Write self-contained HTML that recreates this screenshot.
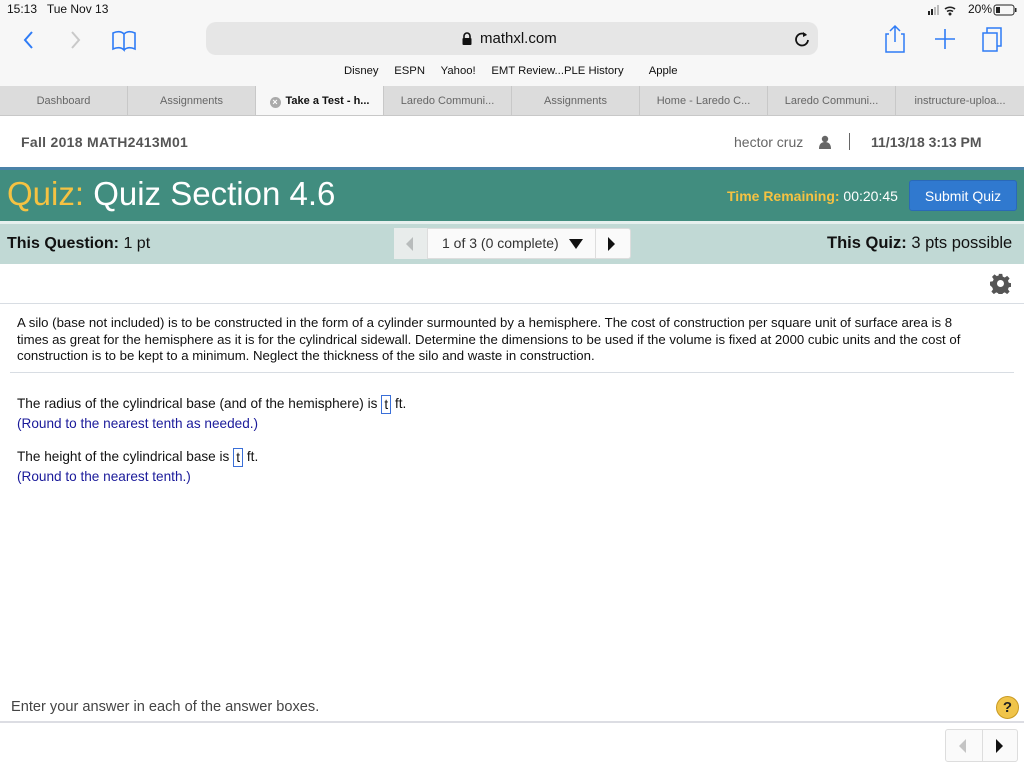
<!DOCTYPE html>
<html><head><style>
*{margin:0;padding:0;box-sizing:border-box}
body{width:1024px;height:768px;overflow:hidden;background:#fff;font-family:"Liberation Sans",Arial,sans-serif;position:relative;color:#222}
.a{position:absolute;white-space:nowrap}
#top{position:absolute;left:0;top:0;width:1024px;height:86px;background:#f7f7f7}
.tab{position:absolute;top:86px;height:30px;width:128px;background:#dcdcdc;border-right:1px solid #c8c8c8;font-size:11px;color:#666;text-align:center;line-height:30px}
.p{color:#111}
.blue{color:#1a1a9a}
.box{display:inline-block;border:1px solid #3a6fd8;width:10px;height:19px;line-height:17px;text-align:center;vertical-align:middle;font-size:13.6px}
</style></head><body>
<div id="top"></div>
<div class="a" style="left:7px;top:2px;font-size:12px;color:#111">15:13&nbsp;&nbsp; Tue Nov 13</div>
<div class="a" style="left:968px;top:2px;font-size:12px;color:#111">20%</div>
<svg class="a" style="left:928px;top:4px" width="90" height="12"><rect x="0" y="7" width="2" height="4" fill="#222"/><rect x="3" y="5" width="2" height="6" fill="#222"/><rect x="6" y="3" width="2" height="8" fill="#bbb"/><rect x="9" y="1" width="2" height="10" fill="#bbb"/><path d="M17 5a8 8 0 0 1 10 0M19 7.5a5 5 0 0 1 6 0" stroke="#222" stroke-width="1.6" fill="none"/><circle cx="22" cy="10" r="1.5" fill="#222"/><rect x="66" y="1" width="20" height="10" rx="2.5" stroke="#222" fill="none"/><rect x="68" y="3" width="4" height="6" fill="#222"/><rect x="87" y="4" width="1.5" height="4" fill="#222"/></svg>
<svg class="a" style="left:20px;top:28px" width="140" height="24"><path d="M12 4 5 12l7 8" stroke="#2f7cf6" stroke-width="2" fill="none"/><path d="M52 4l7 8-7 8" stroke="#c9c9c9" stroke-width="2" fill="none"/><path d="M93 5q7-3 11 1v16q-4-4-11-1zM104 6q4-4 11-1v16q-7-3-11 1" stroke="#2f7cf6" stroke-width="1.6" fill="none"/></svg>
<div class="a" style="left:206px;top:22px;width:612px;height:33px;background:#e6e6e6;border-radius:10px"></div>
<svg class="a" style="left:461px;top:31px" width="12" height="15"><path d="M3 7V5a3 3 0 0 1 6 0v2" stroke="#111" stroke-width="1.6" fill="none"/><rect x="1.5" y="7" width="9" height="7" rx="1" fill="#111"/></svg>
<div class="a" style="left:480px;top:30px;font-size:15px;color:#111">mathxl.com</div>
<svg class="a" style="left:793px;top:30px" width="18" height="18"><path d="M13 5a6 6 0 1 0 2 5" stroke="#111" stroke-width="1.8" fill="none"/><path d="M10 2l4 3-4 2z" fill="#111"/></svg>
<svg class="a" style="left:880px;top:24px" width="130" height="30"><path d="M9 10H6v18h18V10h-3M15 2v16M10 7l5-5 5 5" stroke="#2f7cf6" stroke-width="1.5" fill="none"/><path d="M65 5v20M55 15h20" stroke="#2f7cf6" stroke-width="1.6"/><rect x="103" y="9" width="14" height="18" stroke="#2f7cf6" stroke-width="1.5" fill="none"/><path d="M107 9V4h14v18h-4" stroke="#2f7cf6" stroke-width="1.5" fill="none"/></svg>
<div class="a" style="left:344px;top:65px;font-size:11.3px;color:#111">Disney&nbsp;&nbsp;&nbsp;&nbsp;&nbsp;ESPN&nbsp;&nbsp;&nbsp;&nbsp;&nbsp;Yahoo!&nbsp;&nbsp;&nbsp;&nbsp;&nbsp;EMT Review...PLE History&nbsp;&nbsp;&nbsp;&nbsp;&nbsp;&nbsp;&nbsp;&nbsp;Apple</div>
<div class="tab" style="left:0">Dashboard</div>
<div class="tab" style="left:128px">Assignments</div>
<div class="tab" style="left:256px;background:#f7f7f7;color:#111;font-weight:bold"><span style="display:inline-block;width:11px;height:11px;border-radius:50%;background:#aaa;color:#fff;font-size:9px;line-height:11px;vertical-align:-1px;margin-right:5px">×</span>Take a Test - h...</div>
<div class="tab" style="left:384px">Laredo Communi...</div>
<div class="tab" style="left:512px">Assignments</div>
<div class="tab" style="left:640px">Home - Laredo C...</div>
<div class="tab" style="left:768px">Laredo Communi...</div>
<div class="tab" style="left:896px;border:0">instructure-uploa...</div>
<div class="a" style="left:0;top:115px;width:1024px;height:1px;background:#c8c8c8"></div>
<div class="a" style="left:21px;top:134px;font-size:14px;font-weight:bold;color:#555;letter-spacing:0.3px">Fall 2018 MATH2413M01</div>
<div class="a" style="left:734px;top:134px;font-size:14px;color:#666">hector cruz</div>
<svg class="a" style="left:819px;top:135px" width="12" height="14"><circle cx="6" cy="4" r="3.2" fill="#666"/><path d="M0 14q0-7 6-7t6 7z" fill="#666"/></svg>
<div class="a" style="left:849px;top:133px;width:1px;height:17px;background:#666"></div>
<div class="a" style="left:871px;top:134px;font-size:14px;font-weight:bold;color:#555">11/13/18 3:13 PM</div>
<div class="a" style="left:0;top:167px;width:1024px;height:3px;background:#4a82a8"></div>
<div class="a" style="left:0;top:170px;width:1024px;height:51px;background:#418d7f"></div>
<div class="a" style="left:7px;top:175px;font-size:33px;color:#fff"><span style="color:#f5c242">Quiz:</span> Quiz Section 4.6</div>
<div class="a" style="left:727px;top:188px;font-size:14px;color:#fff"><b style="color:#f5c242">Time Remaining:</b> 00:20:45</div>
<div class="a" style="left:909px;top:180px;width:108px;height:31px;background:#3079cf;border:1px solid #2a69b8;border-radius:3px;color:#fff;font-size:14px;text-align:center;line-height:30px">Submit Quiz</div>
<div class="a" style="left:0;top:221px;width:1024px;height:3px;background:#e6f0ee"></div>
<div class="a" style="left:0;top:224px;width:1024px;height:40px;background:#c1d9d5"></div>
<div class="a" style="left:7px;top:235px;font-size:16px;color:#111"><b>This Question:</b> 1 pt</div>
<div class="a" style="left:827px;top:234px;font-size:16.5px;color:#111"><b>This Quiz:</b> 3 pts possible</div>
<div class="a" style="left:394px;top:228px;width:237px;height:31px;background:#fafafa;border:1px solid #ddd;border-radius:3px"></div>
<div class="a" style="left:394px;top:228px;width:34px;height:31px;background:#e8eceb;border-right:1px solid #ddd"></div>
<div class="a" style="left:595px;top:229px;width:1px;height:29px;background:#ddd"></div>
<svg class="a" style="left:405px;top:236px" width="10" height="16"><path d="M8 1 1 8l7 7z" fill="#b8bcbc"/></svg>
<div class="a" style="left:442px;top:235px;font-size:14px;color:#333">1 of 3 (0 complete)</div>
<svg class="a" style="left:568px;top:238px" width="16" height="12"><path d="M1 1h14L8 11z" fill="#111"/></svg>
<svg class="a" style="left:607px;top:236px" width="10" height="16"><path d="M1 1l7 7-7 7z" fill="#111"/></svg>
<svg class="a" style="left:990px;top:273px" width="21" height="21" viewBox="0 0 24 24"><path fill="#555" d="M10 1h4l.6 3.2 2.3 1 2.7-1.9 2.8 2.8-1.9 2.7 1 2.3 3.2.6v4l-3.2.6-1 2.3 1.9 2.7-2.8 2.8-2.7-1.9-2.3 1-.6 3.2h-4l-.6-3.2-2.3-1-2.7 1.9-2.8-2.8 1.9-2.7-1-2.3L0 14v-4l3.2-.6 1-2.3-1.9-2.7 2.8-2.8 2.7 1.9 2.3-1zM12 8a4 4 0 1 0 0 8 4 4 0 0 0 0-8z"/></svg>
<div class="a" style="left:0;top:303px;width:1024px;height:1px;background:#d8dde3"></div>
<div class="a" style="left:17px;top:315px;font-size:13.2px;line-height:16.5px;color:#111;white-space:normal;width:968px">A silo (base not included) is to be constructed in the form of a cylinder surmounted by a hemisphere. The cost of construction per square unit of surface area is 8 times as great for the hemisphere as it is for the cylindrical sidewall. Determine the dimensions to be used if the volume is fixed at 2000 cubic units and the cost of construction is to be kept to a minimum. Neglect the thickness of the silo and waste in construction.</div>
<div class="a" style="left:10px;top:372px;width:1004px;height:1px;background:#d8dde3"></div>
<div class="a p" style="left:17px;top:395px;font-size:13.6px">The radius of the cylindrical base (and of the hemisphere) is <span class="box">t</span> ft.</div>
<div class="a blue" style="left:17px;top:416px;font-size:13.6px">(Round to the nearest tenth as needed.)</div>
<div class="a p" style="left:17px;top:448px;font-size:13.6px">The height of the cylindrical base is <span class="box">t</span> ft.</div>
<div class="a blue" style="left:17px;top:469px;font-size:13.6px">(Round to the nearest tenth.)</div>
<div class="a" style="left:11px;top:699px;font-size:14.6px;color:#444">Enter your answer in each of the answer boxes.</div>
<div class="a" style="left:996px;top:696px;width:23px;height:23px;border-radius:50%;background:#f0c44a;border:1px solid #c99a22;text-align:center;font-weight:bold;font-size:15px;line-height:21px;color:#222">?</div>
<div class="a" style="left:0;top:721px;width:1024px;height:2px;background:#dcdde3"></div>
<div class="a" style="left:945px;top:729px;width:73px;height:33px;border:1px solid #ddd;border-radius:3px;background:#fafafa"></div>
<div class="a" style="left:982px;top:730px;width:1px;height:31px;background:#ddd"></div>
<svg class="a" style="left:958px;top:738px" width="10" height="16"><path d="M8 1 1 8l7 7z" fill="#c4c4c4"/></svg>
<svg class="a" style="left:995px;top:738px" width="10" height="16"><path d="M1 1l7 7-7 7z" fill="#111"/></svg>
</body></html>
